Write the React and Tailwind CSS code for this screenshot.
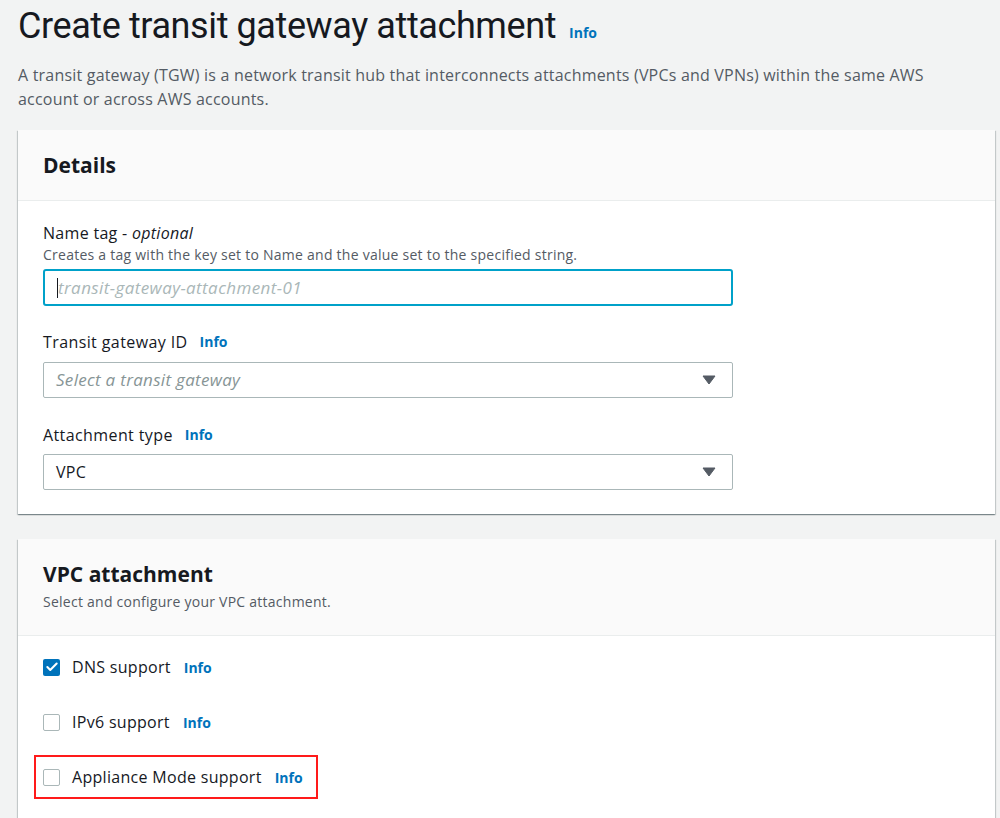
import { Check } from 'lucide-react'

const FONT = { fontFamily: '"Open Sans", "Noto Sans", Arial, sans-serif' }

function Info({ className = '' }) {
  return <span className={`text-[14px] font-bold tracking-normal text-[#0073bb] ${className}`}>Info</span>
}

function Card({ children }) {
  return (
    <div className="bg-white shadow-[0_1px_1px_0_rgba(0,28,36,0.3),1px_1px_1px_0_rgba(0,28,36,0.15),-1px_1px_1px_0_rgba(0,28,36,0.15)]">
      {children}
    </div>
  )
}

function Select({ value, placeholder }) {
  return (
    <div className="flex h-[36px] w-[690px] items-center justify-between rounded-[2px] border border-[#aab7b8] bg-white pl-[12px] pr-[16px]">
      {placeholder ? (
        <span className="text-[17px] italic tracking-[0.3px] text-[#879596]">{placeholder}</span>
      ) : (
        <span className="text-[16px] tracking-[0.3px] text-[#16191f]">{value}</span>
      )}
      <svg width="14" height="10" viewBox="0 0 14 10">
        <path d="M1 1h12L7 9z" fill="#545b64" stroke="#545b64" strokeLinejoin="round" />
      </svg>
    </div>
  )
}

function CheckRow({ label, checked }) {
  return (
    <div className="flex h-[24px] items-center">
      {checked ? (
        <span className="flex h-[17px] w-[17px] items-center justify-center rounded-[2px] bg-[#0073bb]">
          <Check className="h-[14px] w-[14px] text-white" strokeWidth={3.5} />
        </span>
      ) : (
        <span className="h-[17px] w-[17px] rounded-[2px] border border-[#aab7b8] bg-white" />
      )}
      <span className="ml-[12px] text-[16px] tracking-[0.3px] text-[#16191f]">{label}</span>
      <Info className="ml-[13px]" />
    </div>
  )
}

export default function App() {
  return (
    <div style={FONT} className="min-h-[818px] overflow-hidden bg-[#f2f3f3] pl-[18px] pr-[5px] pt-[4px] text-[#16191f]">
      <div className="flex items-baseline">
        <h1
          style={{ fontFamily: 'Roboto, "Open Sans", sans-serif' }}
          className="text-[36px] leading-[44px] tracking-[-0.4px] text-[#16191f]"
        >
          Create transit gateway attachment
        </h1>
        <Info className="ml-[13px]" />
      </div>
      <p className="mt-[15px] max-w-[950px] text-[16px] leading-[24px] tracking-[0.2px] text-[#545b64]">
        A transit gateway (TGW) is a network transit hub that interconnects attachments (VPCs and VPNs) within the same AWS
        account or across AWS accounts.
      </p>

      <div className="mt-[19px]">
        <Card>
          <div className="flex h-[71px] items-center border-b border-[#eaeded] bg-[#fafafa] px-[25px]">
            <h2 className="text-[21px] font-bold leading-[28px]">Details</h2>
          </div>
          <div className="px-[25px] pb-[24px] pt-[21px]">
            <div className="text-[16px] leading-[22px] tracking-[0.3px]">
              Name tag - <i>optional</i>
            </div>
            <div className="text-[14px] leading-[22px] tracking-[0.25px] text-[#545b64]">
              Creates a tag with the key set to Name and the value set to the specified string.
            </div>
            <div className="mt-[3px] flex h-[37px] w-[690px] items-center rounded-[3px] border-2 border-[#00a1c9] bg-white pl-[12px]">
              <span className="h-[20px] w-[1px] bg-[#16191f]" />
              <span className="text-[17px] italic tracking-[0.4px] text-[#aab7b8]">transit-gateway-attachment-01</span>
            </div>

            <div className="mt-[25px] flex items-center text-[16px] leading-[22px] tracking-[0.4px]">
              Transit gateway ID
              <Info className="ml-[12px]" />
            </div>
            <div className="mt-[9px]">
              <Select placeholder="Select a transit gateway" />
            </div>

            <div className="mt-[26px] flex items-center text-[16px] leading-[22px] tracking-[0.4px]">
              Attachment type
              <Info className="ml-[12px]" />
            </div>
            <div className="mt-[8px]">
              <Select value="VPC" />
            </div>
          </div>
        </Card>
      </div>

      <div className="mt-[25px]">
        <Card>
          <div className="border-b border-[#eaeded] bg-[#fafafa] px-[25px] pb-[22px] pt-[21px]">
            <h2 className="text-[21px] font-bold leading-[28px]">VPC attachment</h2>
            <p className="mt-[3px] text-[14px] leading-[22px] tracking-[0.25px] text-[#545b64]">Select and configure your VPC attachment.</p>
          </div>
          <div className="flex flex-col gap-[31px] px-[25px] pb-[40px] pt-[19px]">
            <CheckRow label="DNS support" checked />
            <CheckRow label="IPv6 support" />
            <div className="-mx-[9px] -my-[10px] w-[284px] border-2 border-[#ff1a1a] px-[7px] py-[8px]">
              <CheckRow label="Appliance Mode support" />
            </div>
          </div>
        </Card>
      </div>
    </div>
  )
}
